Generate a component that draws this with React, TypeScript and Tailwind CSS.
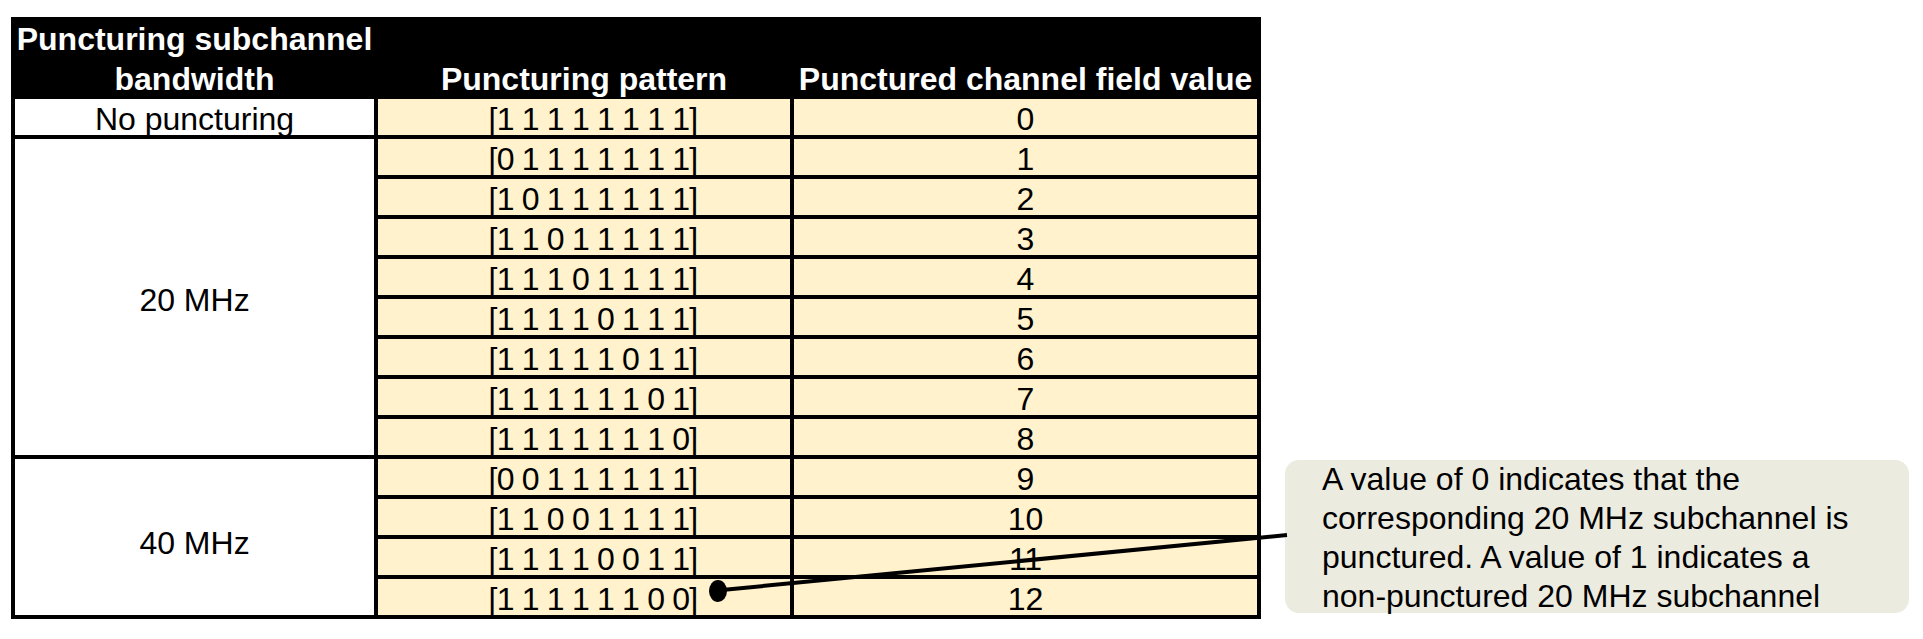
import React from "react";

const patterns = [
  "[1 1 1 1 1 1 1 1]",
  "[0 1 1 1 1 1 1 1]",
  "[1 0 1 1 1 1 1 1]",
  "[1 1 0 1 1 1 1 1]",
  "[1 1 1 0 1 1 1 1]",
  "[1 1 1 1 0 1 1 1]",
  "[1 1 1 1 1 0 1 1]",
  "[1 1 1 1 1 1 0 1]",
  "[1 1 1 1 1 1 1 0]",
  "[0 0 1 1 1 1 1 1]",
  "[1 1 0 0 1 1 1 1]",
  "[1 1 1 1 0 0 1 1]",
  "[1 1 1 1 1 1 0 0]",
];

const rowStart = [
  "row-start-1",
  "row-start-2",
  "row-start-3",
  "row-start-4",
  "row-start-5",
  "row-start-6",
  "row-start-7",
  "row-start-8",
  "row-start-9",
  "row-start-10",
  "row-start-11",
  "row-start-12",
  "row-start-13",
];

export default function App() {
  return (
    <div className="relative w-[1923px] h-[639px] bg-white font-['Liberation_Sans',Arial,sans-serif] text-black">
      <div className="flex items-start pt-[17px] pl-[11px]">
        {/* Table */}
        <div className="w-[1250px] shrink-0">
          <div className="grid grid-cols-[359px_412px_463px] gap-x-[4px] px-[4px] bg-black h-[82px] items-end text-white font-bold text-[32px] leading-[40px] text-center">
            <div>
              Puncturing subchannel
              <br />
              bandwidth
            </div>
            <div>Puncturing pattern</div>
            <div className="whitespace-nowrap">Punctured channel field value</div>
          </div>
          <div className="grid grid-cols-[359px_412px_463px] auto-rows-[36px] gap-[4px] bg-black px-[4px] pb-[4px] text-[32px] leading-[36px] text-center">
            <div className="col-start-1 row-start-1 bg-white flex items-center justify-center pt-[3px]">
              No puncturing
            </div>
            <div className="col-start-1 row-start-2 row-span-8 bg-white flex items-center justify-center pt-[5px]">
              20 MHz
            </div>
            <div className="col-start-1 row-start-10 row-span-4 bg-white flex items-center justify-center pt-[12px]">
              40 MHz
            </div>
            {patterns.map((p, i) => (
              <React.Fragment key={i}>
                <div className={`col-start-2 ${rowStart[i]} bg-[#fff2cc] flex items-center justify-center whitespace-pre tracking-[-0.8px] pt-[3px] pl-[18px]`}>
                  {p}
                </div>
                <div className={`col-start-3 ${rowStart[i]} bg-[#fff2cc] flex items-center justify-center pt-[3px]`}>
                  {i}
                </div>
              </React.Fragment>
            ))}
          </div>
        </div>

        {/* Callout */}
        <div className="ml-[24px] mt-[443px] w-[624px] h-[153px] shrink-0 rounded-[14px] bg-[#ecebe0] pl-[37px] text-[32px] leading-[39px]">
          <span className="block whitespace-nowrap">A value of 0 indicates that the</span>
          <span className="block whitespace-nowrap">corresponding 20 MHz subchannel is</span>
          <span className="block whitespace-nowrap">punctured. A value of 1 indicates a</span>
          <span className="block whitespace-nowrap">non-punctured 20 MHz subchannel</span>
        </div>
      </div>

      {/* Connector */}
      <svg
        className="absolute left-0 top-0 pointer-events-none"
        width="1923"
        height="639"
        viewBox="0 0 1923 639"
      >
        <line x1="722" y1="590" x2="1287" y2="535" stroke="#000" strokeWidth="4" />
        <ellipse cx="718" cy="591" rx="9" ry="11" fill="#000" />
      </svg>
    </div>
  );
}
